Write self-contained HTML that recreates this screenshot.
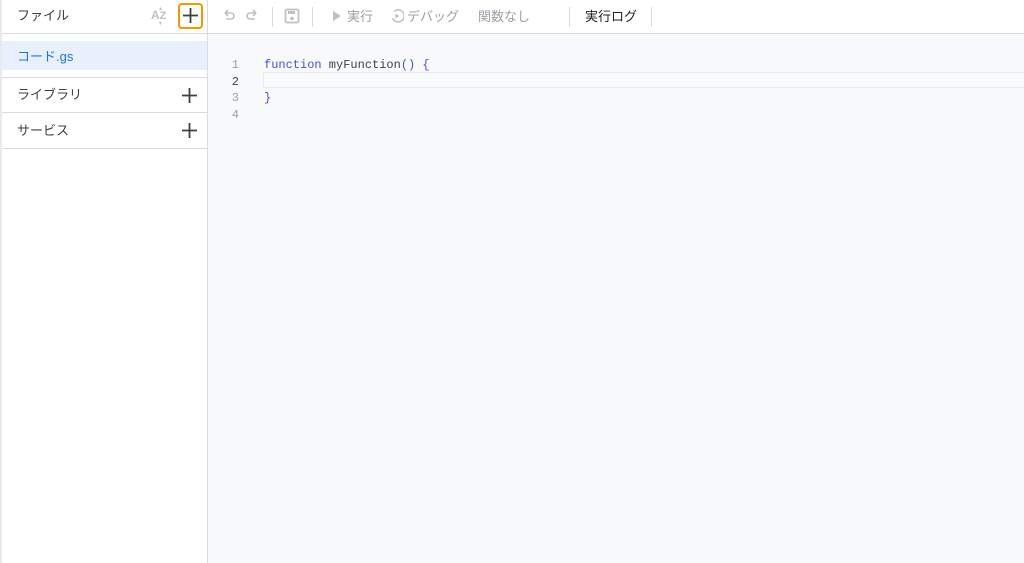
<!DOCTYPE html>
<html><head><meta charset="utf-8"><style>
*{margin:0;padding:0;box-sizing:border-box}
body{width:1024px;height:563px;overflow:hidden;background:#fff;font-family:"Liberation Sans","Noto Sans CJK JP",sans-serif;position:relative}
.a{position:absolute}
.side{left:0;top:0;width:208px;height:563px;border-right:1px solid #dadce0;background:#fff}
.top{left:208px;top:0;right:0;height:34px;border-bottom:1px solid #dadce0;background:#fff}
.ed{left:208px;top:34px;right:0;bottom:0;background:#f8f9fa}
.t{font-size:13px;color:#3c4043}
.g{font-size:13px;color:#9aa0a6}
.hr{height:1px;background:#dadce0;left:2px;width:205px}
.mono{font-family:"Liberation Mono",monospace;font-size:12px}
.sep{width:1px;height:20px;background:#dadce0;top:7px}
</style></head><body>
<div class="a side"></div>
<div class="a" style="left:0;top:0;width:2px;height:563px;background:#e8eaed"></div>
<div class="a t" style="left:17px;top:5px">ファイル</div>
<div class="a" style="left:151px;top:8px;font-size:12px;font-weight:bold;color:#bdc1c6">A<span style="font-size:11px">Z</span></div>
<div class="a" style="left:159px;top:5px;font-size:6px;color:#bdc1c6">▴</div>
<div class="a" style="left:159px;top:20px;font-size:6px;color:#bdc1c6">▾</div>
<div class="a" style="left:178px;top:3px;width:25px;height:26px;border:2.5px solid #f29900;border-radius:4px"></div>
<svg class="a" style="left:181px;top:6px" width="19" height="19"><path d="M9.5 2v15M2 9.5h15" stroke="#3c4043" stroke-width="1.8"/></svg>
<div class="a hr" style="top:33px"></div>
<div class="a" style="left:2px;top:41px;width:205px;height:29px;background:#e8f0fe"></div>
<div class="a" style="left:17px;top:46px;font-size:13px;color:#1a73e8">コード.gs</div>
<div class="a hr" style="top:77px"></div>
<div class="a t" style="left:17px;top:84px">ライブラリ</div>
<svg class="a" style="left:180px;top:86px" width="19" height="19"><path d="M9.5 2v15M2 9.5h15" stroke="#3c4043" stroke-width="1.8"/></svg>
<div class="a hr" style="top:112px"></div>
<div class="a t" style="left:17px;top:120px">サービス</div>
<svg class="a" style="left:180px;top:121px" width="19" height="19"><path d="M9.5 2v15M2 9.5h15" stroke="#3c4043" stroke-width="1.8"/></svg>
<div class="a hr" style="top:148px"></div>

<div class="a top"></div>
<svg class="a" style="left:220px;top:8px" width="16" height="16"><path d="M5 5h6a3 3 0 0 1 0 6H6M5 5l3-3M5 5l3 3" fill="none" stroke="#bdc1c6" stroke-width="1.6"/></svg>
<svg class="a" style="left:245px;top:8px" width="16" height="16"><path d="M11 5H5a3 3 0 0 0 0 6h5M11 5L8 2M11 5L8 8" fill="none" stroke="#bdc1c6" stroke-width="1.6"/></svg>
<div class="a sep" style="left:272px"></div>
<svg class="a" style="left:284px;top:8px" width="16" height="16"><rect x="1.5" y="1.5" width="13" height="13" rx="1.5" fill="none" stroke="#bdc1c6" stroke-width="1.8"/><rect x="4" y="3" width="7" height="3" fill="#bdc1c6"/><circle cx="8" cy="10.5" r="1.8" fill="#bdc1c6"/></svg>
<div class="a sep" style="left:312px"></div>
<svg class="a" style="left:332px;top:10px" width="10" height="12"><path d="M1 1l8 5-8 5z" fill="#bdc1c6"/></svg>
<div class="a g" style="left:347px;top:6px">実行</div>
<svg class="a" style="left:390px;top:9px" width="14" height="14"><path d="M4 2.5A6 6 0 1 1 2.5 9" fill="none" stroke="#bdc1c6" stroke-width="1.5"/><path d="M5.5 4.5l4 2.5-4 2.5z" fill="#bdc1c6"/></svg>
<div class="a g" style="left:407px;top:6px">デバッグ</div>
<div class="a g" style="left:478px;top:6px">関数なし</div>
<div class="a sep" style="left:569px"></div>
<div class="a t" style="left:585px;top:6px;color:#202124">実行ログ</div>
<div class="a sep" style="left:651px"></div>

<div class="a ed"></div>
<div class="a" style="left:263px;top:72px;right:0;height:16px;border:1px solid #e8eaed;border-right:none"></div>
<div class="a mono" style="left:231px;top:57px;color:#9aa0a6;line-height:16.5px;text-align:right;width:8px">1<br><span style="color:#3c4043">2</span><br>3<br>4</div>
<div class="a mono" style="left:264px;top:57px;line-height:16.5px;color:#3c4043"><span style="color:#4551d6">function</span> myFunction<span style="color:#4551d6">() {</span><br><br><span style="color:#4551d6">}</span></div>
</body></html>
